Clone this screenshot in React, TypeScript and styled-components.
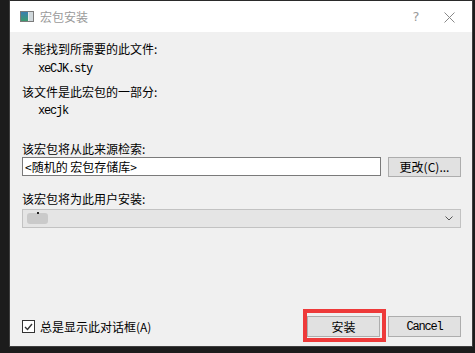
import React from 'react';
import styled, { createGlobalStyle } from 'styled-components';

const Global = createGlobalStyle`
  html, body { margin: 0; padding: 0; }
  body {
    width: 475px; height: 353px; overflow: hidden;
    background: #1c1c1c;
    font-family: "Noto Sans CJK SC", "Noto Sans", sans-serif;
    font-size: 12px; color: #000;
  }
`;

const Desktop = styled.div`
  width: 475px; height: 353px; box-sizing: border-box;
  padding: 0 2px 6px 9px;
  display: flex;
  background: #1c1c1c;
`;

const Window = styled.div`
  flex: 1;
  display: flex; flex-direction: column;
  border: 1px solid #3e3e3e;
  border-top-color: #2a2a2a;
  background: #f0f0f0;
`;

const TitleBar = styled.div`
  height: 31px; flex: none;
  background: #fff;
  display: flex; align-items: center;
  padding: 0 0 0 10px;
`;

const TitleText = styled.span`
  margin-left: 6px;
  color: #9a9a9a;
  font-size: 12px;
  flex: 1;
`;

const TitleBtn = styled.span<{ $w: number }>`
  width: ${p => p.$w}px;
  text-align: center;
  color: #9a9a9a;
  font-family: "DejaVu Sans", sans-serif;
  font-size: 13px;
  line-height: 31px;
`;

const Body = styled.div`
  flex: 1;
  display: flex; flex-direction: column;
  padding: 8px 11px 9px 12px;
`;

const Label = styled.div<{ $mt?: number; $lh?: number }>`
  margin-top: ${p => p.$mt ?? 0}px;
  line-height: ${p => p.$lh ?? 18}px;
  height: ${p => p.$lh ?? 18}px;
  white-space: nowrap;
`;

const FileName = styled.div<{ $mt?: number }>`
  margin-top: ${p => p.$mt ?? 0}px;
  padding-left: 16px;
  line-height: 18px; height: 18px;
  font-family: "Liberation Mono", "DejaVu Sans Mono", monospace;
  font-size: 12px;
  letter-spacing: -1.2px;
`;

const SourceRow = styled.div`
  display: flex; gap: 7px; align-items: flex-start;
`;

const TextBox = styled.div`
  flex: 1;
  height: 19px; box-sizing: border-box;
  border: 1px solid #7a7a7a;
  background: #fff;
  padding-left: 2px;
  line-height: 17px;
  white-space: nowrap;
`;

const Button = styled.button<{ $h?: number; $mono?: boolean }>`
  width: 73px; height: ${p => p.$h ?? 21}px;
  box-sizing: border-box;
  border: 1px solid #adadad;
  background: #e1e1e1;
  padding: 0; margin: 0;
  font-family: ${p => p.$mono ? '"Liberation Mono", "DejaVu Sans Mono", monospace' : '"Noto Sans CJK SC", sans-serif'};
  font-size: 12px;
  letter-spacing: ${p => p.$mono ? '-1.2px' : '0'};
  color: #000;
  line-height: 1;
`;

const Select = styled.div`
  margin-top: 2px;
  height: 19px; box-sizing: border-box;
  border: 1px solid #c2c2c2;
  background: #e5e5e5;
  display: flex; align-items: center;
  padding: 0 7px 0 4px;
`;

const Blur = styled.div`
  width: 21px; height: 11px;
  border-radius: 3px;
  background: #cacaca;
  position: relative;
  &::after {
    content: ""; position: absolute; left: 10px; top: -1px;
    width: 2px; height: 2px; background: #222;
  }
`;

const Grow = styled.div` flex: 1; `;

const BottomRow = styled.div`
  margin-top: auto;
  display: flex; align-items: center; gap: 8px;
  height: 21px;
`;

const CheckLabel = styled.label`
  flex: 1;
  display: flex; align-items: center; gap: 5px;
  white-space: nowrap;
`;

const CheckBox = styled.span`
  width: 13px; height: 13px; box-sizing: border-box;
  border: 1px solid #333;
  background: #fff;
  display: flex; align-items: center; justify-content: center;
`;

const Highlight = styled.span`
  position: relative;
  display: flex;
  &::after {
    content: "";
    position: absolute;
    left: -4px; right: -6px; top: -7px; bottom: -5px;
    border: 4px solid #ee3a3a;
    box-sizing: border-box;
    pointer-events: none;
  }
`;

const AppIcon = () => (
  <svg width="14" height="11" viewBox="0 0 14 11">
    <rect x="0.5" y="0.5" width="13" height="10" fill="#e8e8e8" stroke="#7b7b7b" />
    <defs>
      <linearGradient id="g" x1="0" y1="0" x2="0" y2="1">
        <stop offset="0" stopColor="#3a7fb0" />
        <stop offset="1" stopColor="#3c9a6e" />
      </linearGradient>
    </defs>
    <rect x="1" y="1" width="7" height="9" fill="url(#g)" />
    <rect x="9" y="1" width="4" height="9" fill="#d0d8dc" />
  </svg>
);

export default function App() {
  return (
    <>
      <Global />
      <Desktop>
        <Window>
          <TitleBar>
            <AppIcon />
            <TitleText>宏包安装</TitleText>
            <TitleBtn $w={20}>?</TitleBtn>
            <TitleBtn $w={46}>
              <svg width="11" height="11" viewBox="0 0 11 11" style={{ verticalAlign: 'middle' }}>
                <path d="M0.5 0.5 L10.5 10.5 M10.5 0.5 L0.5 10.5" stroke="#888" strokeWidth="1" />
              </svg>
            </TitleBtn>
          </TitleBar>
          <Body>
            <Label>未能找到所需要的此文件:</Label>
            <FileName $mt={2}>xeCJK.sty</FileName>
            <Label $mt={5}>该文件是此宏包的一部分:</Label>
            <FileName $mt={1}>xecjk</FileName>
            <Label $mt={21} $lh={16}>该宏包将从此来源检索:</Label>
            <SourceRow>
              <TextBox>&lt;随机的 宏包存储库&gt;</TextBox>
              <Button $h={20}>更改(C)...</Button>
            </SourceRow>
            <Label $mt={14} $lh={16}>该宏包将为此用户安装:</Label>
            <Select>
              <Blur />
              <Grow />
              <svg width="8" height="5" viewBox="0 0 8 5">
                <path d="M0.5 0.5 L4 4 L7.5 0.5" fill="none" stroke="#555" strokeWidth="1" />
              </svg>
            </Select>
            <BottomRow>
              <CheckLabel>
                <CheckBox>
                  <svg width="9" height="8" viewBox="0 0 9 8">
                    <path d="M1 4 L3.5 6.5 L8 1" fill="none" stroke="#333" strokeWidth="1.4" />
                  </svg>
                </CheckBox>
                总是显示此对话框(A)
              </CheckLabel>
              <Highlight>
                <Button>安装</Button>
              </Highlight>
              <Button $mono>Cancel</Button>
            </BottomRow>
          </Body>
        </Window>
      </Desktop>
    </>
  );
}
